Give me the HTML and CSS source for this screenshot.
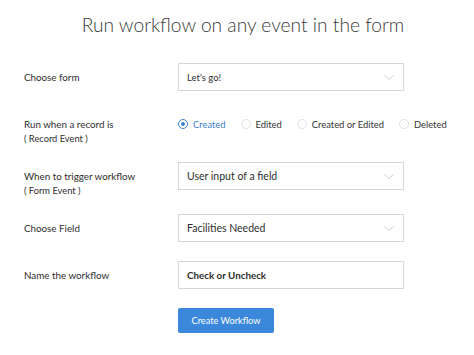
FILE: index.html
```html
<!DOCTYPE html>
<html lang="en">
<head>
  <meta charset="UTF-8" />
  <title>Create workflow</title>
  <link rel="stylesheet" href="styles.css">
</head>
<body>
  <div class="page">
    <h1 class="title">Run workflow on any event in the form</h1>

    <div class="form">
      <div class="row">
        <div class="label">Choose form</div>
        <div class="select small">
          <span>Let's go!</span>
          <svg class="chevron" width="10" height="5" viewBox="0 0 10 5"><path d="M0.5 0.5 L5 4.5 L9.5 0.5" fill="none" stroke="#c4c4c4" stroke-width="0.8"/></svg>
        </div>
      </div>

      <div class="row">
        <div class="label">Run when a record is<span class="sub">( Record Event )</span></div>
        <div class="radios">
          <label class="radio checked"><span class="dot"></span>Created</label>
          <label class="radio"><span class="dot"></span>Edited</label>
          <label class="radio"><span class="dot"></span>Created or Edited</label>
          <label class="radio"><span class="dot"></span>Deleted</label>
        </div>
      </div>

      <div class="row">
        <div class="label">When to trigger workflow<span class="sub">( Form Event )</span></div>
        <div class="select">
          <span>User input of a field</span>
          <svg class="chevron" width="10" height="5" viewBox="0 0 10 5"><path d="M0.5 0.5 L5 4.5 L9.5 0.5" fill="none" stroke="#c4c4c4" stroke-width="0.8"/></svg>
        </div>
      </div>

      <div class="row">
        <div class="label">Choose Field</div>
        <div class="select">
          <span>Facilities Needed</span>
          <svg class="chevron" width="10" height="5" viewBox="0 0 10 5"><path d="M0.5 0.5 L5 4.5 L9.5 0.5" fill="none" stroke="#c4c4c4" stroke-width="0.8"/></svg>
        </div>
      </div>

      <div class="row">
        <div class="label">Name the workflow</div>
        <div class="input">Check or Uncheck</div>
      </div>

      <div class="row">
        <div class="label"></div>
        <button type="button" class="button">Create Workflow</button>
      </div>
    </div>
  </div>
</body>
</html>
```

FILE: styles.css
```css
body {
  margin: 0;
  background: #ffffff;
  font-family: Lato, "Open Sans", sans-serif;
  color: #333333;
}

.page {
  width: 438px;
  padding: 13px 0 0 24px;
}

.title {
  margin: 0;
  font-size: 19.2px;
  font-weight: 300;
  line-height: 24px;
  text-align: center;
  color: #3a3a3a;
}

.form {
  display: flex;
  flex-direction: column;
  gap: 17px;
  margin-top: 26px;
}

.row {
  display: flex;
  align-items: flex-start;
  min-height: 30px;
}

.label {
  width: 154px;
  flex-shrink: 0;
  padding-top: 8px;
  font-size: 9.8px;
  line-height: 13.5px;
  color: #2e2e2e;
}

.sub {
  display: block;
  font-size: 9.3px;
}

.select,
.input {
  box-sizing: border-box;
  width: 226px;
  height: 28px;
  border: 1px solid #d6d6d6;
  padding: 0 8px;
  display: flex;
  align-items: center;
  justify-content: space-between;
  font-size: 10.5px;
  color: #2e2e2e;
}

.select.small {
  font-size: 9.5px;
}

.chevron {
  margin-right: 1px;
}

.input {
  font-size: 9.8px;
  font-weight: 700;
}

.radios {
  height: 28px;
  display: flex;
  align-items: center;
  gap: 15px;
  font-size: 9.4px;
}

.radio {
  display: flex;
  align-items: center;
  gap: 5px;
  color: #333333;
}

.dot {
  box-sizing: border-box;
  width: 10px;
  height: 10px;
  border-radius: 50%;
  border: 1px solid #e0e0e0;
  display: flex;
  align-items: center;
  justify-content: center;
}

.radio.checked {
  color: #3b7fcf;
}

.radio.checked .dot {
  border-color: #3b82d6;
}

.radio.checked .dot::after {
  content: "";
  width: 4px;
  height: 4px;
  border-radius: 50%;
  background: #3b82d6;
}

.button {
  width: 96px;
  height: 25px;
  border: none;
  border-radius: 2px;
  background: #3a87dc;
  color: #ffffff;
  font-family: Lato, sans-serif;
  font-size: 9.2px;
  padding: 0;
  cursor: pointer;
}
```
